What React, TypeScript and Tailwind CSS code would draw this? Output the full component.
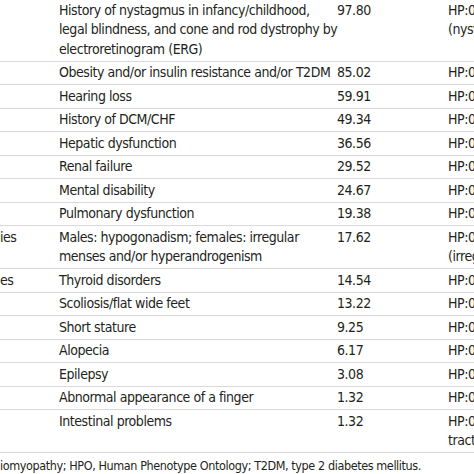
type Row = {
  group?: string;
  trait: string[];
  freq: string;
  hpo: string[];
};

const rows: Row[] = [
  {
    trait: [
      "History of nystagmus in infancy/childhood,",
      "legal blindness, and cone and rod dystrophy by",
      "electroretinogram (ERG)",
    ],
    freq: "97.80",
    hpo: ["HP:0000639", "(nystagmus)"],
  },
  { trait: ["Obesity and/or insulin resistance and/or T2DM"], freq: "85.02", hpo: ["HP:0001513"] },
  { trait: ["Hearing loss"], freq: "59.91", hpo: ["HP:0000365"] },
  { trait: ["History of DCM/CHF"], freq: "49.34", hpo: ["HP:0001644"] },
  { trait: ["Hepatic dysfunction"], freq: "36.56", hpo: ["HP:0001410"] },
  { trait: ["Renal failure"], freq: "29.52", hpo: ["HP:0000083"] },
  { trait: ["Mental disability"], freq: "24.67", hpo: ["HP:0001249"] },
  { trait: ["Pulmonary dysfunction"], freq: "19.38", hpo: ["HP:0002086"] },
  {
    group: "ies",
    trait: ["Males: hypogonadism; females: irregular", "menses and/or hyperandrogenism"],
    freq: "17.62",
    hpo: ["HP:0000135", "(irregular menses)"],
  },
  { group: "es", trait: ["Thyroid disorders"], freq: "14.54", hpo: ["HP:0000820"] },
  { trait: ["Scoliosis/flat wide feet"], freq: "13.22", hpo: ["HP:0002650"] },
  { trait: ["Short stature"], freq: "9.25", hpo: ["HP:0004322"] },
  { trait: ["Alopecia"], freq: "6.17", hpo: ["HP:0001596"] },
  { trait: ["Epilepsy"], freq: "3.08", hpo: ["HP:0001250"] },
  { trait: ["Abnormal appearance of a finger"], freq: "1.32", hpo: ["HP:0001167"] },
  {
    trait: ["Intestinal problems", ""],
    freq: "1.32",
    hpo: ["HP:0011024 (abnormality of the gastrointestinal", "tract)"],
  },
];

export default function App() {
  return (
    <div className="w-[474px] h-[474px] overflow-hidden bg-white text-[#231f20] font-['Liberation_Sans_Narrow','DejaVu_Sans_Condensed','Liberation_Sans',sans-serif] text-[14px] tracking-[-0.45px] leading-[19.5px]">
      <div className="-mt-[1px]">
        {rows.map((r, i) => (
          <div
            key={i}
            className="grid grid-cols-[59px_278px_111px_1fr] border-b border-[#d9d9d9] py-[1.5px] whitespace-nowrap"
          >
            <div className="overflow-hidden">{r.group ?? ""}</div>
            <div>
              {r.trait.map((t, j) => (
                <div key={j} className="h-[19.5px]">
                  {t}
                </div>
              ))}
            </div>
            <div>{r.freq}</div>
            <div className="overflow-hidden">
              {r.hpo.map((h, j) => (
                <div key={j}>{h}</div>
              ))}
            </div>
          </div>
        ))}
      </div>
      <div className="pt-[3px] whitespace-nowrap text-[12.5px] tracking-[-0.4px]">
        iomyopathy; HPO, Human Phenotype Ontology; T2DM, type 2 diabetes mellitus.
      </div>
    </div>
  );
}
